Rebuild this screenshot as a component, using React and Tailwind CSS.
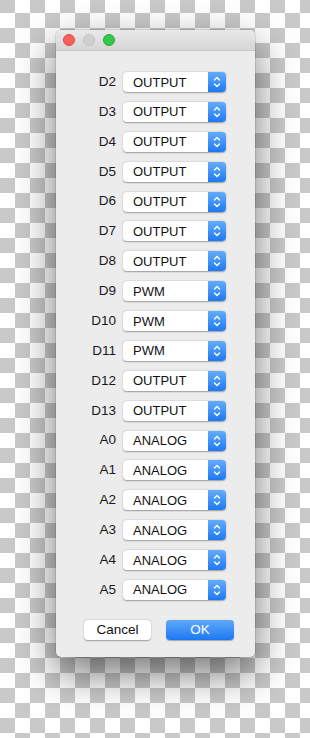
const PINS = [
  ['D2', 'OUTPUT'],
  ['D3', 'OUTPUT'],
  ['D4', 'OUTPUT'],
  ['D5', 'OUTPUT'],
  ['D6', 'OUTPUT'],
  ['D7', 'OUTPUT'],
  ['D8', 'OUTPUT'],
  ['D9', 'PWM'],
  ['D10', 'PWM'],
  ['D11', 'PWM'],
  ['D12', 'OUTPUT'],
  ['D13', 'OUTPUT'],
  ['A0', 'ANALOG'],
  ['A1', 'ANALOG'],
  ['A2', 'ANALOG'],
  ['A3', 'ANALOG'],
  ['A4', 'ANALOG'],
  ['A5', 'ANALOG'],
]

function Stepper() {
  return (
    <span className="flex h-full w-[18px] items-center justify-center rounded-r-[4px] bg-gradient-to-b from-[#63acfc] to-[#1c78f2]">
      <svg width="10" height="14" viewBox="0 0 10 14" fill="none" stroke="white" strokeWidth="1.4" strokeLinecap="round" strokeLinejoin="round">
        <path d="M2.5 5 L5 2.5 L7.5 5" />
        <path d="M2.5 9 L5 11.5 L7.5 9" />
      </svg>
    </span>
  )
}

function PinRow({ pin, mode }) {
  return (
    <div className="flex h-5 items-center">
      <span className="w-[61px] pr-px text-right text-[13.5px] text-[#1a1a1a]">{pin}</span>
      <div className="ml-[6px] flex h-5 w-[103px] items-center rounded-[4px] bg-white shadow-[0_0.5px_1.5px_rgba(0,0,0,0.35)]">
        <span className="flex-1 pl-[10px] text-[13px] leading-none text-[#111]">{mode}</span>
        <Stepper />
      </div>
    </div>
  )
}

export default function App() {
  return (
    <div
      className="flex h-[738px] w-[310px] items-start bg-[repeating-conic-gradient(#ffffff_0_25%,#c9c9c9_0_50%)] bg-[length:30px_30px] bg-[position:0px_-2px] pl-[56px] pt-[30px]"
      style={{ fontFamily: '"Liberation Sans", Arial, sans-serif' }}
    >
      <div className="flex h-[627px] w-[199px] flex-col overflow-hidden rounded-[5px] bg-[#ececec] shadow-[0_16px_40px_rgba(0,0,0,0.55),0_0_0_0.5px_rgba(0,0,0,0.2)]">
        {/* title bar */}
        <div className="flex h-[21px] shrink-0 items-center gap-[8px] border-b border-[#c9c9c9] bg-gradient-to-b from-[#e9e9e9] to-[#d6d6d6] pl-[7px]">
          <span className="h-[12px] w-[12px] rounded-full border-[0.5px] border-[#e2463f] bg-[#fc605c]" />
          <span className="h-[12px] w-[12px] rounded-full border-[0.5px] border-[#c4c4c4] bg-[#d0d0d0]" />
          <span className="h-[12px] w-[12px] rounded-full border-[0.5px] border-[#2aa43a] bg-[#34c84a]" />
        </div>

        {/* pin list */}
        <div className="flex flex-col gap-[9.88px] pt-[21px]">
          {PINS.map(([pin, mode]) => (
            <PinRow key={pin} pin={pin} mode={mode} />
          ))}
        </div>

        {/* buttons */}
        <div className="mt-[20px] flex justify-end gap-[15px] pr-[21px]">
          <button className="h-5 w-[67px] rounded-[4px] bg-white text-[13.5px] text-[#111] shadow-[0_0.5px_1.5px_rgba(0,0,0,0.35)]">
            Cancel
          </button>
          <button className="h-5 w-[68px] rounded-[4px] bg-gradient-to-b from-[#5fa9fb] to-[#1a78f2] text-[13.5px] text-white shadow-[0_0.5px_1px_rgba(0,0,0,0.3)]">
            OK
          </button>
        </div>
      </div>
    </div>
  )
}
